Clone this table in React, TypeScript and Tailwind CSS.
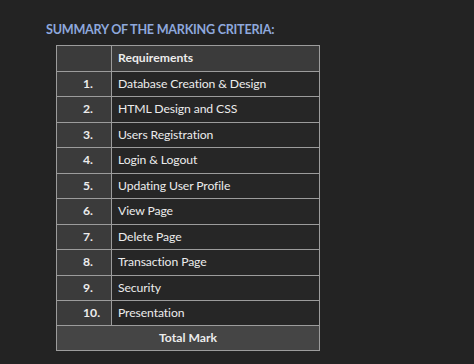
import React from 'react';

const criteria = [
  'Database Creation & Design',
  'HTML Design and CSS',
  'Users Registration',
  'Login & Logout',
  'Updating User Profile',
  'View Page',
  'Delete Page',
  'Transaction Page',
  'Security',
  'Presentation',
];

// row heights so the lines land where the scan has them
const heights = ['h-[25px]', 'h-[26px]', 'h-[25px]', 'h-[26px]', 'h-[25px]', 'h-[26px]', 'h-[25px]', 'h-[26px]', 'h-[25px]', 'h-[25px]'];

export default function App() {
  return (
    <div
      className="w-[474px] h-[364px] bg-[#232323] pt-[21px] pl-[46px]"
      style={{ fontFamily: '"Lato", "Open Sans", sans-serif' }}
    >
      <h2 className="text-[12.6px] font-bold leading-[18px] tracking-[-0.25px] text-[#8ea8dc]">
        SUMMARY OF THE MARKING CRITERIA:
      </h2>
      <table className="mt-[6px] ml-[10px] w-[264px] border-collapse text-[12.2px] text-[#ececec]">
        <tbody>
          <tr className="h-[26px]">
            <td className="w-[55px] border border-[#9c9c9c] bg-[#3b3b3b]"></td>
            <td className="border border-[#9c9c9c] bg-[#3b3b3b] pl-[6px] font-bold">Requirements</td>
          </tr>
          {criteria.map((c, i) => (
            <tr key={c} className={heights[i]}>
              <td className="border border-[#9c9c9c] bg-[#3b3b3b] pl-[26px] font-bold">{i + 1}.</td>
              <td className="border border-[#9c9c9c] bg-[#262626] pl-[6px] tracking-[-0.1px]">{c}</td>
            </tr>
          ))}
          <tr className="h-[25px]">
            <td colSpan={2} className="border border-[#9c9c9c] bg-[#454545] text-center font-bold">
              Total Mark
            </td>
          </tr>
        </tbody>
      </table>
    </div>
  );
}
